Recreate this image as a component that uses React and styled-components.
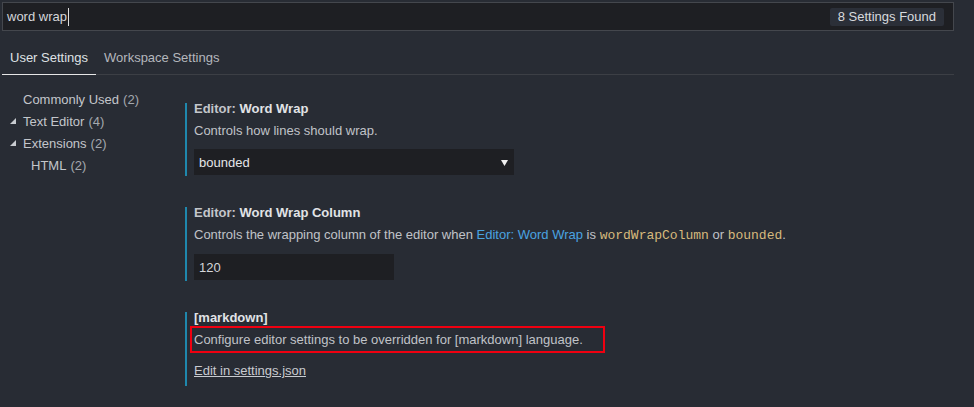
import styled, { createGlobalStyle } from 'styled-components';

const GlobalStyle = createGlobalStyle`
  html, body {
    margin: 0;
    padding: 0;
    background: #282c34;
  }
  body {
    font-family: "Liberation Sans", Arial, sans-serif;
    font-size: 13px;
    color: #c8cbd0;
  }
`;

const Page = styled.div`
  width: 974px;
  height: 407px;
  background: #282c34;
  overflow: hidden;
`;

const SearchBar = styled.div`
  margin: 2px 20px 0 2px;
  height: 29px;
  box-sizing: border-box;
  border: 1px solid #44474d;
  background: #1e1f23;
  display: flex;
  align-items: center;
  padding: 0 9px 0 4px;
`;

const Query = styled.span`
  flex: 1;
  font-size: 13px;
  color: #d4d6da;
  display: flex;
  align-items: center;
`;

const Caret = styled.span`
  display: inline-block;
  width: 1px;
  height: 18px;
  background: #e0e0e0;
  margin-left: 1px;
`;

const CountBadge = styled.span`
  background: #2b2f38;
  color: #d8dade;
  font-size: 13px;
  padding: 2px 8px;
  line-height: 14px;
  border-radius: 2px;
`;

const Tabs = styled.div`
  margin: 10px 20px 0 2px;
  display: flex;
  border-bottom: 1px solid #3c3f45;
`;

const Tab = styled.div`
  padding: 8px;
  font-size: 13px;
  line-height: 17px;
  color: ${(p) => (p.$active ? '#dfe1e4' : '#b4b7bd')};
  border-bottom: 1px solid ${(p) => (p.$active ? '#e6e6e6' : 'transparent')};
  margin-bottom: -1px;
`;

const Body = styled.div`
  display: flex;
  padding-top: 13px;
`;

const Tree = styled.ul`
  list-style: none;
  margin: 0;
  padding: 0;
  width: 185px;
  flex-shrink: 0;
`;

const TreeItem = styled.li`
  display: flex;
  align-items: center;
  height: 22px;
  padding-left: ${(p) => p.$indent}px;
  color: #c3c6cb;
`;

const Arrow = styled.span`
  width: 13px;
  display: inline-flex;
  padding-left: 9px;
  box-sizing: content-box;
  margin-left: -22px;
  svg {
    display: block;
  }
`;

const Count = styled.span`
  color: #a4a8ae;
  margin-left: 4px;
`;

const Settings = styled.div`
  display: flex;
  flex-direction: column;
  gap: 31px;
  padding-top: 15px;
`;

const Setting = styled.div`
  border-left: 2px solid #1f88ad;
  padding: 0 0 1px 7px;
  display: flex;
  flex-direction: column;
  align-items: flex-start;
`;

const Title = styled.div`
  font-weight: bold;
  color: #e1e3e6;
  line-height: 17px;
  margin-top: -3px;
`;

const Category = styled.span`
  color: #c3c6cb;
`;

const Description = styled.div`
  color: #c0c3c8;
  line-height: 17px;
  margin-top: 5px;
  position: relative;
`;

const Highlight = styled.span`
  position: absolute;
  left: -4px;
  top: -5px;
  width: 415px;
  height: 27px;
  box-sizing: border-box;
  border: 2px solid #f00010;
  pointer-events: none;
`;

const LinkText = styled.span`
  color: #4aa3e0;
`;

const Code = styled.span`
  font-family: "Liberation Mono", "DejaVu Sans Mono", monospace;
  color: #d7ba7d;
`;

const Select = styled.div`
  margin-top: 10px;
  width: 320px;
  height: 26px;
  box-sizing: border-box;
  background: #1e1f23;
  display: flex;
  align-items: center;
  justify-content: space-between;
  padding: 0 6px 0 5px;
  color: #e4e6e9;
`;

const NumberInput = styled.div`
  margin-top: 10px;
  width: 200px;
  height: 26px;
  box-sizing: border-box;
  background: #1e1f23;
  display: flex;
  align-items: center;
  padding: 0 5px;
  color: #d4d6da;
`;

const EditLink = styled.a`
  margin-top: 14px;
  color: #c8cbd0;
  text-decoration: underline;
  line-height: 17px;
  margin-bottom: 6px;
`;

function TreeArrow() {
  return (
    <svg width="6" height="6" viewBox="0 0 6 6">
      <path d="M6 0 L6 6 L0 6 Z" fill="#c8cbd0" />
    </svg>
  );
}

function DropdownArrow() {
  return (
    <svg width="7" height="7" viewBox="0 0 7 7">
      <path d="M0 1 L7 1 L3.5 7 Z" fill="#f0f0f0" />
    </svg>
  );
}

export default function App() {
  return (
    <Page>
      <GlobalStyle />
      <SearchBar>
        <Query>
          word wrap
          <Caret />
        </Query>
        <CountBadge>8 Settings Found</CountBadge>
      </SearchBar>
      <Tabs>
        <Tab $active>User Settings</Tab>
        <Tab>Workspace Settings</Tab>
      </Tabs>
      <Body>
        <Tree>
          <TreeItem $indent={23}>
            Commonly Used<Count>(2)</Count>
          </TreeItem>
          <TreeItem $indent={23}>
            <Arrow>
              <TreeArrow />
            </Arrow>
            Text Editor<Count>(4)</Count>
          </TreeItem>
          <TreeItem $indent={23}>
            <Arrow>
              <TreeArrow />
            </Arrow>
            Extensions<Count>(2)</Count>
          </TreeItem>
          <TreeItem $indent={31}>
            HTML<Count>(2)</Count>
          </TreeItem>
        </Tree>
        <Settings>
          <Setting>
            <Title>
              <Category>Editor: </Category>Word Wrap
            </Title>
            <Description>Controls how lines should wrap.</Description>
            <Select>
              bounded
              <DropdownArrow />
            </Select>
          </Setting>
          <Setting>
            <Title>
              <Category>Editor: </Category>Word Wrap Column
            </Title>
            <Description>
              Controls the wrapping column of the editor when <LinkText>Editor: Word Wrap</LinkText> is{' '}
              <Code>wordWrapColumn</Code> or <Code>bounded</Code>.
            </Description>
            <NumberInput>120</NumberInput>
          </Setting>
          <Setting>
            <Title>[markdown]</Title>
            <Description>
              Configure editor settings to be overridden for [markdown] language.
              <Highlight />
            </Description>
            <EditLink>Edit in settings.json</EditLink>
          </Setting>
        </Settings>
      </Body>
    </Page>
  );
}
